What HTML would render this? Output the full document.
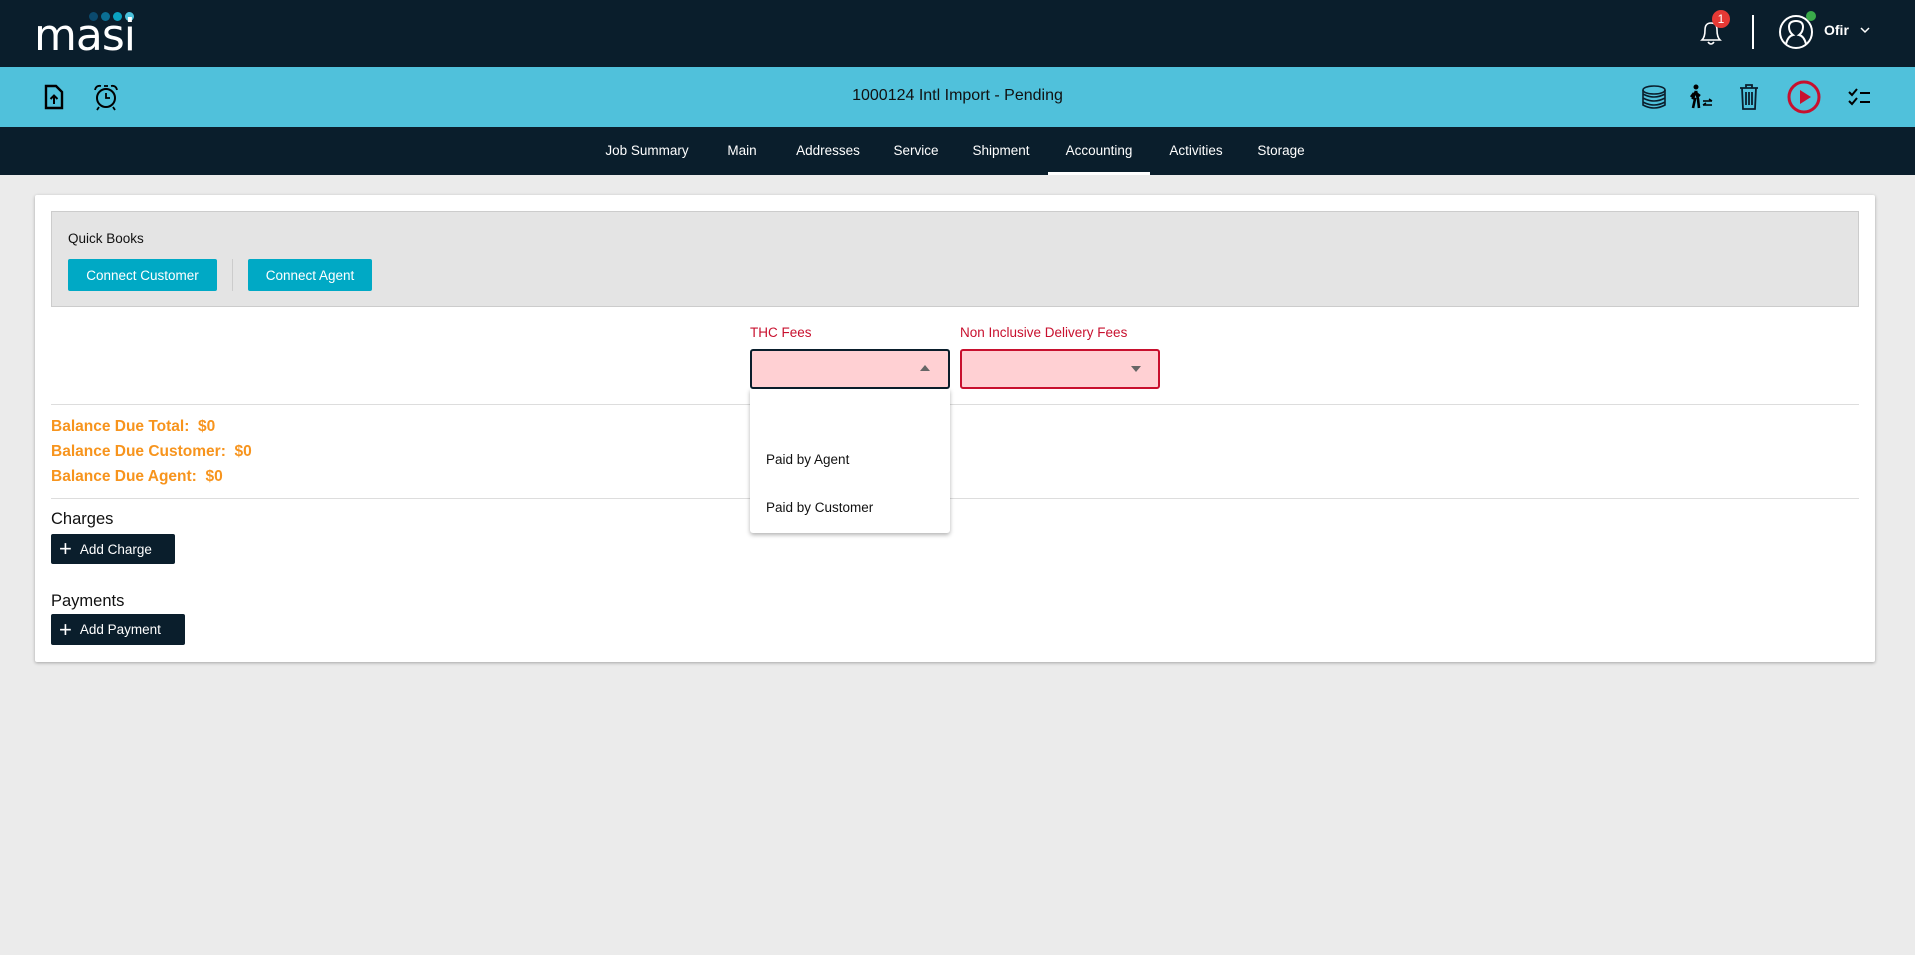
<!DOCTYPE html>
<html><head><meta charset="utf-8"><style>
*{box-sizing:border-box;margin:0;padding:0}
body{width:1915px;height:955px;background:#ebebeb;font-family:"Liberation Sans",sans-serif;position:relative;overflow:hidden}
.abs{position:absolute}
.top{left:0;top:0;width:1915px;height:67px;background:#0a1e2c}
.cyan{left:0;top:67px;width:1915px;height:60px;background:#50c1db}
.nav{left:0;top:127px;width:1915px;height:48px;background:#0a1e2c}
.nav span{position:absolute;top:16px;color:#fff;font-size:13.5px;transform:translateX(-50%)}
.card{left:35px;top:195px;width:1840px;height:467px;background:#fff;box-shadow:0 1px 3px rgba(0,0,0,.3);border-radius:2px}
.qb{left:51px;top:211px;width:1808px;height:96px;background:#e4e4e4;border:1px solid #ccc}
.btn{background:#00a9c5;color:#fff;font-size:13.5px;display:flex;align-items:center;justify-content:center;border-radius:2px}
.dbtn{background:#0a1e2c;color:#fff;font-size:13.5px;display:flex;align-items:center;border-radius:2px;padding-left:8px}
.bal{color:#f7941d;font-size:15.5px;font-weight:bold;left:51px}
.lbl{color:#c8102e;font-size:13.5px}
.sel{background:#ffd0d3;border-radius:3px}
.hr{left:51px;width:1808px;height:1px;background:#ddd}
</style></head><body>
<div class="abs top"></div>
<div class="abs" style="left:34px;top:12px;width:100px;height:42px">
 <div class="abs" style="left:55px;top:0;width:9px;height:9px;border-radius:50%;background:#0b4a6e"></div>
 <div class="abs" style="left:67px;top:0;width:9px;height:9px;border-radius:50%;background:#0b6e93"></div>
 <div class="abs" style="left:79px;top:0;width:9px;height:9px;border-radius:50%;background:#0aa2c0"></div>
 <div class="abs" style="left:91px;top:0;width:9px;height:9px;border-radius:50%;background:#4cc2dc"></div>
 <div class="abs" style="left:0;top:5px;color:#fff;font-size:44px;font-family:'DejaVu Sans',sans-serif;letter-spacing:-1px;line-height:38px">masi</div>
</div>
<svg class="abs" style="left:1696px;top:16px" width="30" height="32" viewBox="0 0 30 32"><path d="M6 24 Q9 21 9 14 Q9 7 15 7 Q21 7 21 14 Q21 21 24 24 Z M12 26 Q15 30 18 26" fill="none" stroke="#fff" stroke-width="1.6"/></svg>
<div class="abs" style="left:1712px;top:10px;width:18px;height:18px;border-radius:50%;background:#e53935;color:#fff;font-size:12px;text-align:center;line-height:18px">1</div>
<div class="abs" style="left:1752px;top:15px;width:2px;height:34px;background:#fff"></div>
<svg class="abs" style="left:1778px;top:14px" width="36" height="36" viewBox="0 0 36 36"><circle cx="18" cy="18" r="16" fill="none" stroke="#fff" stroke-width="2"/><path d="M8 30 Q10 22 15 21 Q11 18 11 13 Q11 7 18 7 Q25 7 25 13 Q25 18 21 21 Q26 22 28 30" fill="none" stroke="#fff" stroke-width="2"/></svg>
<div class="abs" style="left:1806px;top:11px;width:10px;height:10px;border-radius:50%;background:#3aab4a"></div>
<div class="abs" style="left:1824px;top:22px;color:#fff;font-size:14px;font-weight:bold">Ofir</div>
<svg class="abs" style="left:1860px;top:26px" width="10" height="8"><path d="M1 2 L5 6 L9 2" fill="none" stroke="#fff" stroke-width="1.5"/></svg>

<div class="abs cyan"></div>
<svg class="abs" style="left:43px;top:84px" width="22" height="26" viewBox="0 0 22 26"><path d="M3 2 H13 L19 8 V24 H3 Z" fill="none" stroke="#000" stroke-width="2.4"/><path d="M11 20 V12 M7.5 15 L11 11.5 L14.5 15" fill="none" stroke="#000" stroke-width="2"/></svg>
<svg class="abs" style="left:92px;top:83px" width="28" height="28" viewBox="0 0 28 28"><circle cx="14" cy="15" r="9" fill="none" stroke="#000" stroke-width="2"/><path d="M14 10 V15 H18 M3 7 Q4 2 9 3 M25 7 Q24 2 19 3 M7 24 L5 27 M21 24 L23 27 M12 3 H16" fill="none" stroke="#000" stroke-width="1.8"/></svg>
<div class="abs" style="left:0;width:1915px;top:87px;text-align:center;font-size:16px;color:#111">1000124 Intl Import - Pending</div>
<svg class="abs" style="left:1640px;top:83px" width="28" height="28" viewBox="0 0 28 28" fill="none" stroke="#0a1e2c" stroke-width="1.6"><ellipse cx="14" cy="7" rx="11" ry="4"/><path d="M3 7 V11 Q14 17 25 11 V7 M3 11 V15 Q14 21 25 15 V11 M3 15 V19 Q14 25 25 19 V15 M3 19 V22 Q14 28 25 22 V19"/></svg>
<svg class="abs" style="left:1688px;top:84px" width="26" height="26" viewBox="0 0 26 26"><circle cx="8" cy="3" r="2.5"/><path d="M8 7 L5 14 L7 15 L5 24 M8 7 L10 15 L11 24 M8 9 L12 12 M6 9 L3 13" fill="none" stroke="#000" stroke-width="2.6"/><path d="M15 17 H24 M21 15 L24 17 M15 21 H24 M18 19 L15 21" stroke="#000" stroke-width="1.4" fill="none"/></svg>
<svg class="abs" style="left:1738px;top:83px" width="22" height="28" viewBox="0 0 22 28" fill="none" stroke="#0a1e2c" stroke-width="1.8"><path d="M2 5 H20 M8 5 V2 H14 V5 M4 5 L5 26 H17 L18 5 M8 9 V22 M11 9 V22 M14 9 V22"/></svg>
<svg class="abs" style="left:1787px;top:80px" width="34" height="34" viewBox="0 0 34 34"><circle cx="17" cy="17" r="15" fill="none" stroke="#c8102e" stroke-width="3"/><path d="M13 10 L24 17 L13 24 Z" fill="#c8102e"/></svg>
<svg class="abs" style="left:1848px;top:87px" width="24" height="20" viewBox="0 0 24 20" fill="none" stroke="#000" stroke-width="2"><path d="M1 5 L4 8 L9 2 M1 14 L4 17 L9 11 M12 6 H22 M12 15 H22"/></svg>

<div class="abs nav"></div>
<div class="abs" style="left:0;top:127px;width:1915px;height:48px;color:#fff">
<div class="abs nav" style="top:0;background:none"><span style="left:647px">Job Summary</span><span style="left:742px">Main</span><span style="left:828px">Addresses</span><span style="left:916px">Service</span><span style="left:1001px">Shipment</span><span style="left:1099px">Accounting</span><span style="left:1196px">Activities</span><span style="left:1281px">Storage</span></div>
<div class="abs" style="left:1048px;top:45px;width:102px;height:3px;background:#fff"></div>
</div>

<div class="abs card"></div>
<div class="abs qb"></div>
<div class="abs" style="left:68px;top:231px;font-size:13.5px;color:#111">Quick Books</div>
<div class="abs btn" style="left:68px;top:259px;width:149px;height:32px">Connect Customer</div>
<div class="abs" style="left:232px;top:259px;width:1px;height:32px;background:#ccc"></div>
<div class="abs btn" style="left:248px;top:259px;width:124px;height:32px">Connect Agent</div>

<div class="abs lbl" style="left:750px;top:325px">THC Fees</div>
<div class="abs lbl" style="left:960px;top:325px">Non Inclusive Delivery Fees</div>
<div class="abs sel" style="left:750px;top:349px;width:200px;height:40px;border:2px solid #0a1e2c"></div>
<svg class="abs" style="left:920px;top:365px" width="10" height="6"><path d="M0 6 L5 0 L10 6Z" fill="#666"/></svg>
<div class="abs sel" style="left:960px;top:349px;width:200px;height:40px;border:2px solid #c8102e"></div>
<svg class="abs" style="left:1131px;top:366px" width="10" height="6"><path d="M0 0 L5 6 L10 0Z" fill="#666"/></svg>

<div class="abs hr" style="top:404px"></div>
<div class="abs bal" style="top:418px">Balance Due Total:&nbsp; $0</div>
<div class="abs bal" style="top:443px">Balance Due Customer:&nbsp; $0</div>
<div class="abs bal" style="top:468px">Balance Due Agent:&nbsp; $0</div>
<div class="abs hr" style="top:498px"></div>
<div class="abs" style="left:51px;top:510px;font-size:16.5px;color:#111">Charges</div>
<div class="abs dbtn" style="left:51px;top:534px;width:124px;height:30px"><span style="font-size:22px;margin-right:8px;font-weight:300">+</span>Add Charge</div>
<div class="abs" style="left:51px;top:592px;font-size:16.5px;color:#111">Payments</div>
<div class="abs dbtn" style="left:51px;top:614px;width:134px;height:31px"><span style="font-size:22px;margin-right:8px;font-weight:300">+</span>Add Payment</div>

<div class="abs" style="left:750px;top:389px;width:200px;height:144px;background:#fff;box-shadow:0 2px 4px rgba(0,0,0,.3);border-radius:0 0 3px 3px"></div>
<div class="abs" style="left:766px;top:452px;font-size:13.5px;color:#111">Paid by Agent</div>
<div class="abs" style="left:766px;top:500px;font-size:13.5px;color:#111">Paid by Customer</div>
</body></html>
